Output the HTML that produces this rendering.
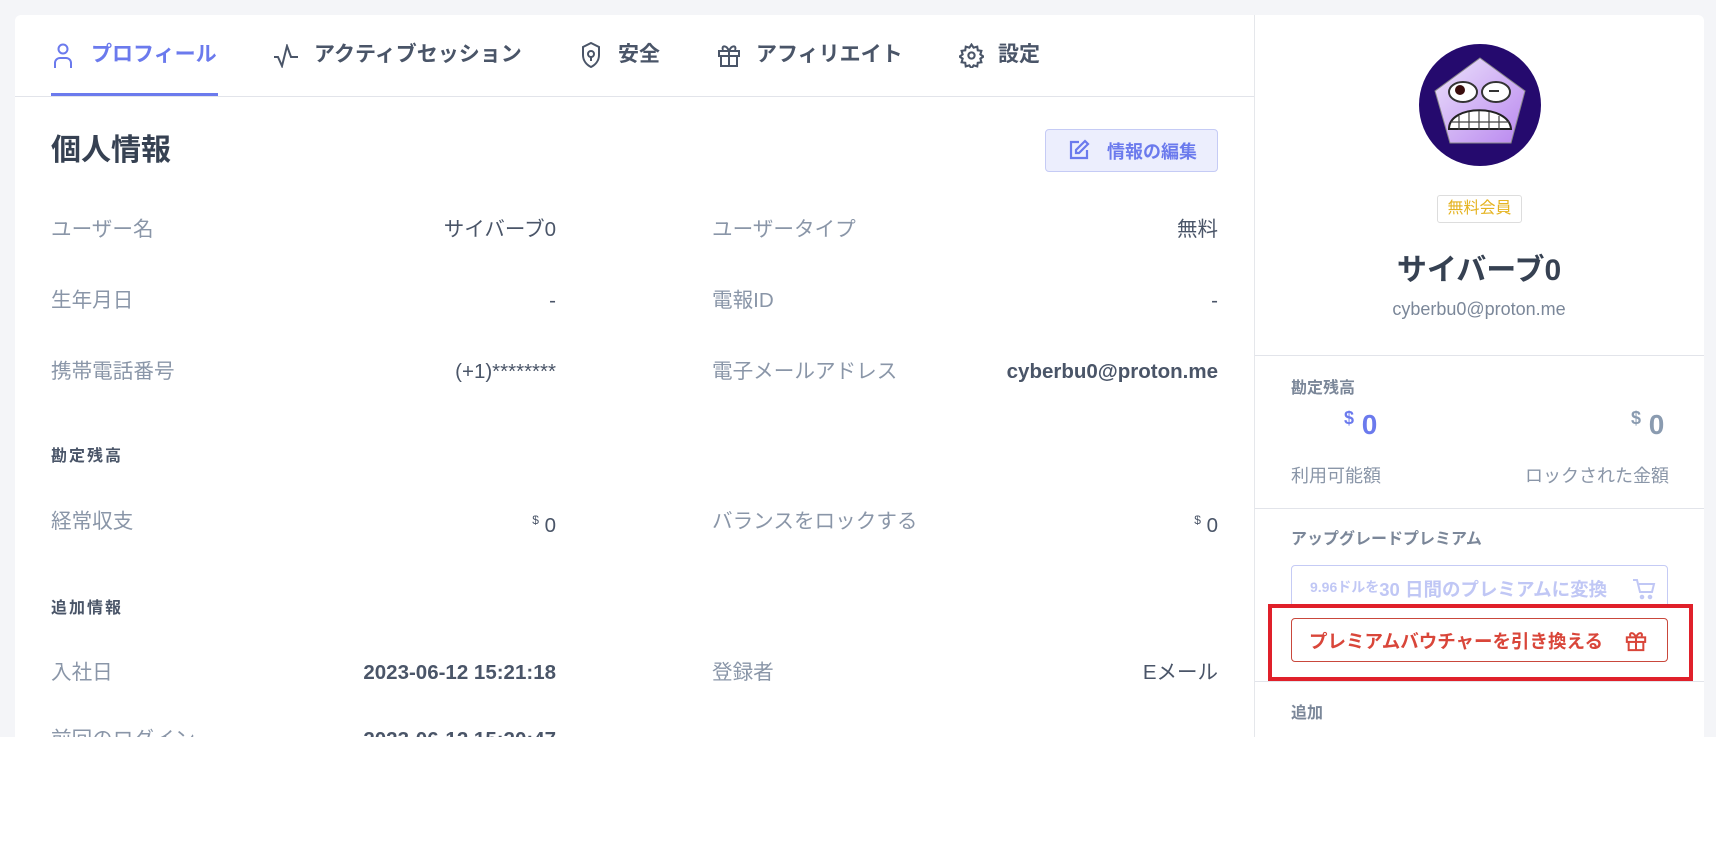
<!DOCTYPE html>
<html><head><meta charset="utf-8"><style>
*{margin:0;padding:0;box-sizing:border-box}
body{width:1716px;height:864px;background:#fff;font-family:"Liberation Sans","Noto Sans CJK JP",sans-serif;position:relative;overflow:hidden}
.bg{position:absolute;left:0;top:0;width:1716px;height:737px;background:#f4f5f8}
.card{position:absolute;background:#fff}
.a{position:absolute;white-space:nowrap}
.tab{position:absolute;top:41px;font-size:21px;font-weight:bold;color:#4a5568;height:28px;line-height:28px}
.lbl{position:absolute;font-size:20.6px;color:#8a96a8;line-height:24px}
.val{position:absolute;font-size:20.5px;color:#4a5568;line-height:24px;text-align:right}
.sec{position:absolute;font-size:16px;font-weight:bold;color:#4a5568;letter-spacing:2px}
svg{position:absolute}
</style></head><body>
<div class="bg"></div>
<div class="card" style="left:15px;top:15px;width:1239px;height:722px;border-radius:6px 0 0 0"></div>
<div class="card" style="left:1254px;top:15px;width:450px;height:722px;border-left:1px solid #e5e7eb;border-radius:0 6px 0 0"></div>

<!-- tabs -->
<svg style="left:53px;top:43px" width="20" height="26" viewBox="0 0 20 26" fill="none" stroke="#6b7aed" stroke-width="2"><circle cx="10" cy="6" r="4.5"/><path d="M2 25v-5a5 5 0 0 1 5-5h6a5 5 0 0 1 5 5v5"/></svg>
<div class="tab" style="left:91px;color:#6b7aed">プロフィール</div>
<div class="a" style="left:51px;top:93px;width:167px;height:4px;background:#6b7aed"></div>
<div class="a" style="left:15px;top:96px;width:1239px;height:1px;background:#e2e4ea"></div>
<svg style="left:273px;top:44px" width="26" height="24" viewBox="0 0 26 24" fill="none" stroke="#4a5568" stroke-width="2"><path d="M1 13h4l4 9 5-20 4 11h7"/></svg>
<div class="tab" style="left:314px">アクティブセッション</div>
<svg style="left:581px;top:42px" width="20" height="26" viewBox="0 0 20 26" fill="none" stroke="#4a5568" stroke-width="2"><path d="M10 1l8 4v8c0 6-4 10-8 12-4-2-8-6-8-12V5z"/><circle cx="10" cy="12" r="3"/><path d="M10 15v4"/></svg>
<div class="tab" style="left:618px">安全</div>
<svg style="left:717px;top:43px" width="24" height="24" viewBox="0 0 24 24" fill="none" stroke="#4a5568" stroke-width="2"><rect x="2" y="8" width="20" height="5"/><path d="M4 13v10h16V13M12 8v15M12 8C9 1 4 3 6 7M12 8c3-7 8-5 6-1"/></svg>
<div class="tab" style="left:756px">アフィリエイト</div>
<svg style="left:959px;top:43px" width="25" height="25" viewBox="0 0 24 24" fill="none" stroke="#4a5568" stroke-width="2"><circle cx="12" cy="12" r="3"/><path d="M12 1.5l2 3 3.5-1 .5 3.5 3.5.5-1 3.5 3 2-3 2 1 3.5-3.5.5-.5 3.5-3.5-1-2 3-2-3-3.5 1-.5-3.5-3.5-.5 1-3.5-3-2 3-2-1-3.5 3.5-.5.5-3.5 3.5 1z"/></svg>
<div class="tab" style="left:998px">設定</div>

<div class="a" style="left:51px;top:125px;font-size:30px;font-weight:bold;color:#364152">個人情報</div>
<div class="a" style="left:1045px;top:129px;width:173px;height:43px;background:#eceefd;border:1px solid #c5cbf5;border-radius:4px"></div>
<svg style="left:1068px;top:139px" width="22" height="22" viewBox="0 0 22 22" fill="none" stroke="#6b7aed" stroke-width="2.2"><path d="M11 3H3v16h16v-8"/><path d="M17 2l3 3-9 9H8v-3z"/></svg>
<div class="a" style="left:1107px;top:138px;font-size:18px;font-weight:bold;color:#6b7aed">情報の編集</div>

<div class="lbl" style="left:51px;top:218px">ユーザー名</div>
<div class="val" style="right:1160px;top:218px">サイバーブ0</div>
<div class="lbl" style="left:712px;top:218px">ユーザータイプ</div>
<div class="val" style="right:498px;top:218px">無料</div>

<div class="lbl" style="left:51px;top:289px">生年月日</div>
<div class="val" style="right:1160px;top:289px">-</div>
<div class="lbl" style="left:712px;top:289px">電報ID</div>
<div class="val" style="right:498px;top:289px">-</div>

<div class="lbl" style="left:51px;top:360px">携帯電話番号</div>
<div class="val" style="right:1160px;top:360px">(+1)********</div>
<div class="lbl" style="left:712px;top:360px">電子メールアドレス</div>
<div class="val" style="right:498px;top:360px;font-weight:bold">cyberbu0@proton.me</div>

<div class="sec" style="left:51px;top:442px">勘定残高</div>
<div class="lbl" style="left:51px;top:510px">経常収支</div>
<div class="val" style="right:1160px;top:508px"><sup style="font-size:12px">$</sup> 0</div>
<div class="lbl" style="left:712px;top:510px">バランスをロックする</div>
<div class="val" style="right:498px;top:508px"><sup style="font-size:12px">$</sup> 0</div>

<div class="sec" style="left:51px;top:594px">追加情報</div>
<div class="lbl" style="left:51px;top:661px">入社日</div>
<div class="val" style="right:1160px;top:661px;font-weight:bold">2023-06-12 15:21:18</div>
<div class="lbl" style="left:712px;top:661px">登録者</div>
<div class="val" style="right:498px;top:661px">Eメール</div>
<div class="lbl" style="left:51px;top:728px">前回のログイン</div>
<div class="val" style="right:1160px;top:728px;font-weight:bold">2023-06-12 15:20:47</div>
<div class="a" style="left:0;top:737px;width:1716px;height:127px;background:#fff"></div>

<!-- right -->
<svg style="left:1419px;top:44px" width="122" height="122" viewBox="0 0 122 122"><circle cx="61" cy="61" r="61" fill="#250a6e"/><defs><linearGradient id="g" x1="0" y1="0" x2="1" y2="1"><stop offset="0" stop-color="#ece2fb"/><stop offset="1" stop-color="#b987ef"/></linearGradient></defs><path d="M61 14l45 33-14 52H31L16 47z" fill="url(#g)" stroke="#888" stroke-width="1"/><ellipse cx="44" cy="48" rx="14" ry="10" fill="#fff" stroke="#333" stroke-width="2"/><circle cx="41" cy="46" r="5" fill="#3a0d0d"/><ellipse cx="77" cy="48" rx="14" ry="10" fill="#fff" stroke="#333" stroke-width="2"/><path d="M70 47h10" stroke="#333" stroke-width="2"/><path d="M30 85c0-25 60-25 62 0z" fill="#fff" stroke="#222" stroke-width="2"/><path d="M40 72v14M50 68v18M60 67v19M70 68v18M80 72v14M32 78h58" stroke="#444" stroke-width="1.2"/></svg>
<div class="a" style="left:1437px;top:195px;width:85px;height:28px;border:1px solid #ddd;border-radius:3px;color:#e5b320;font-size:16px;text-align:center;line-height:26px">無料会員</div>
<div class="a" style="left:1254px;width:450px;text-align:center;top:245px;font-size:30px;font-weight:bold;color:#364152">サイバーブ0</div>
<div class="a" style="left:1254px;width:450px;text-align:center;top:299px;font-size:18px;color:#7b8799">cyberbu0@proton.me</div>
<div class="a" style="left:1255px;top:355px;width:449px;height:1px;background:#e2e4ea"></div>
<div class="a" style="left:1291px;top:374px;font-size:16px;font-weight:bold;color:#7b8799">勘定残高</div>
<div class="a" style="left:1344px;top:408px;font-size:28px;font-weight:bold;color:#6b7aed"><span style="font-size:18px;vertical-align:10px">$</span> 0</div>
<div class="a" style="left:1631px;top:408px;font-size:28px;font-weight:bold;color:#8a9bb0"><span style="font-size:18px;vertical-align:10px">$</span> 0</div>
<div class="a" style="left:1291px;top:462px;font-size:18px;color:#8a96a8">利用可能額</div>
<div class="a" style="right:47px;top:462px;font-size:18px;color:#8a96a8">ロックされた金額</div>
<div class="a" style="left:1255px;top:508px;width:449px;height:1px;background:#e2e4ea"></div>
<div class="a" style="left:1291px;top:525px;font-size:16px;font-weight:bold;color:#7b8799">アップグレードプレミアム</div>
<div class="a" style="left:1291px;top:565px;width:377px;height:48px;border:1px solid #c5cbf5;border-radius:4px"></div>
<div class="a" style="left:1310px;top:572px;font-size:14px;font-weight:bold;color:#c0c7f5">9.96ドルを<span style="font-size:18.5px;position:relative;top:4px">30 日間のプレミアムに変換</span></div>
<svg style="left:1632px;top:578px" width="24" height="22" viewBox="0 0 24 22" fill="none" stroke="#c0c7f5" stroke-width="2"><path d="M1 2h4l3 12h12l2-8H7"/><circle cx="10" cy="19" r="1.3"/><circle cx="18" cy="19" r="1.3"/></svg>
<div class="a" style="left:1268px;top:604px;width:425px;height:77px;border:4px solid #e0202a;background:#fff"></div>
<div class="a" style="left:1291px;top:618px;width:377px;height:44px;border:1px solid #c9483c;border-radius:4px"></div>
<div class="a" style="left:1309px;top:628px;font-size:18.5px;font-weight:bold;color:#d9463a">プレミアムバウチャーを引き換える</div>
<svg style="left:1625px;top:630px" width="22" height="22" viewBox="0 0 24 24" fill="none" stroke="#d9463a" stroke-width="2.2"><rect x="2" y="8" width="20" height="5"/><path d="M4 13v9h16v-9M12 8v14M12 8C9 1 4 3 6 7M12 8c3-7 8-5 6-1"/></svg>
<div class="a" style="left:1255px;top:681px;width:449px;height:1px;background:#e2e4ea"></div>
<div class="a" style="left:1291px;top:699px;font-size:16px;font-weight:bold;color:#7b8799">追加</div>
</body></html>
